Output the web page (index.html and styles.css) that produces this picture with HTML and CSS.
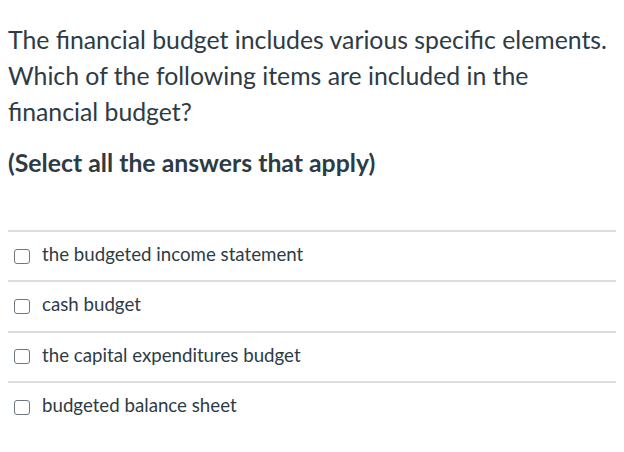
FILE: index.html
```html
<!DOCTYPE html>
<html>
<head>
<meta charset="utf-8">
<link rel="stylesheet" href="styles.css">
</head>
<body>
<div class="question">
  <p class="prompt">The financial budget includes various specific elements. Which of the following items are included in the financial budget?</p>
  <p class="instruction">(Select all the answers that apply)</p>
  <ul class="answers">
    <li class="answer"><span class="box"></span><span class="label">the budgeted income statement</span></li>
    <li class="answer"><span class="box"></span><span class="label">cash budget</span></li>
    <li class="answer"><span class="box"></span><span class="label">the capital expenditures budget</span></li>
    <li class="answer"><span class="box"></span><span class="label">budgeted balance sheet</span></li>
  </ul>
</div>
</body>
</html>
```

FILE: styles.css
```css
html, body {
  margin: 0;
  padding: 0;
  background: #ffffff;
}
body {
  padding: 22px 8px 0 8px;
  font-family: Lato, "Noto Sans", sans-serif;
  color: #2d3b45;
}
.prompt {
  margin: 0;
  font-size: 24.8px;
  line-height: 36px;
  width: 608px;
}
.instruction {
  margin: 15px 0 0 0;
  font-size: 24.8px;
  line-height: 36px;
  font-weight: bold;
}
.answers {
  list-style: none;
  margin: 49px 0 0 0;
  padding: 0;
}
.answer {
  display: flex;
  align-items: center;
  height: 48.3px;
  border-top: 2px solid #dddddd;
  font-size: 18.7px;
}
.box {
  box-sizing: border-box;
  width: 16px;
  height: 15px;
  border: 1.5px solid #6d7780;
  border-radius: 3px;
  margin: 0 12px 0 6px;
  flex: none;
}
.label {
  line-height: 20px;
  margin-bottom: 4px;
}
```
